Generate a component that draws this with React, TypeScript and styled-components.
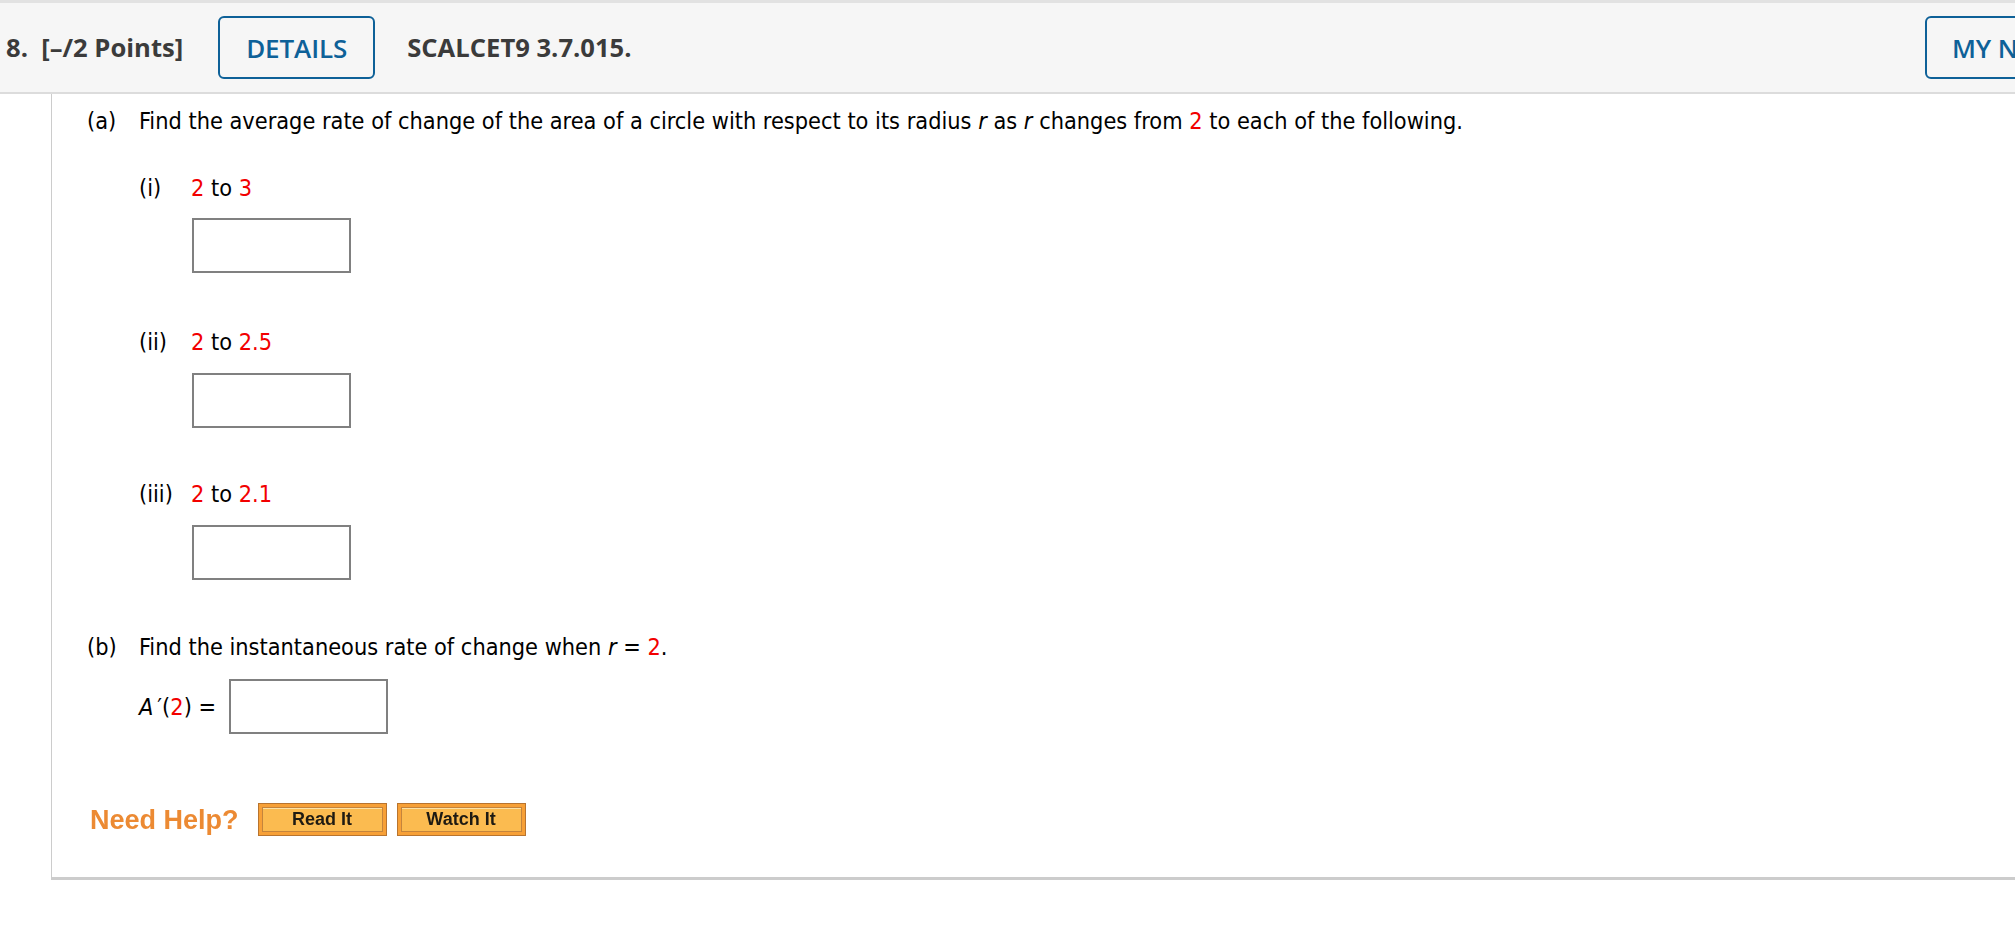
import styled, { createGlobalStyle } from "styled-components";

const GlobalStyle = createGlobalStyle`
  body {
    margin: 0;
    background: #ffffff;
    font-family: "DejaVu Sans Condensed", "DejaVu Sans", Verdana, sans-serif;
    color: #000;
  }
`;

const Header = styled.div`
  display: flex;
  align-items: center;
  height: 89px;
  background: #f6f6f6;
  border-top: 3px solid #e2e2e2;
  border-bottom: 2px solid #dcdcdc;
  overflow: hidden;
  padding-left: 6px;
  font-family: "Open Sans", sans-serif;
  font-weight: 700;
  font-size: 25.6px;
  color: #3b3b3b;
`;

const HeaderText = styled.span<{ $gap?: number }>`
  margin-right: ${(p) => p.$gap ?? 0}px;
  white-space: nowrap;
`;

const OutlineButton = styled.button<{ $push?: boolean }>`
  box-sizing: border-box;
  height: 63px;
  width: 157px;
  padding: 0;
  border: 2px solid #0e6198;
  border-radius: 6px;
  background: transparent;
  color: #0e6198;
  font-family: "Open Sans", sans-serif;
  font-weight: 600;
  font-size: 26px;
  letter-spacing: -0.1px;
  margin-right: 32px;
  flex-shrink: 0;
  white-space: nowrap;
  ${(p) =>
    p.$push
      ? "margin-left: auto; margin-right: -90px; width: 180px; text-align: left; padding-left: 25px;"
      : ""}
`;

const Panel = styled.div`
  margin-left: 51px;
  border-left: 1px solid #cccccc;
  border-bottom: 3px solid #cccccc;
  padding: 15px 0 41px 35px;
  font-size: 23.3px;
  line-height: 24px;
`;

const Row = styled.div<{ $top?: number }>`
  display: flex;
  align-items: center;
  margin-top: ${(p) => p.$top ?? 0}px;
`;

const Label = styled.span`
  width: 52px;
  flex-shrink: 0;
`;

const Indent = styled.div`
  padding-left: 52px;
`;

const Red = styled.span`
  color: #f20000;
`;

const Var = styled.i`
  font-style: italic;
`;

const Prime = styled.span`
  margin-left: 4px;
`;

const Equation = styled.span`
  margin-right: 13px;
`;

const AnswerBox = styled.input<{ $left?: number; $top?: number }>`
  display: block;
  box-sizing: border-box;
  width: 159px;
  height: 55px;
  border: 2px solid #808080;
  background: #fff;
  margin-left: ${(p) => p.$left ?? 0}px;
  margin-top: ${(p) => p.$top ?? 0}px;
  outline: none;
`;

const HelpRow = styled.div`
  display: flex;
  align-items: center;
  margin-top: 69px;
  padding-left: 3px;
`;

const HelpText = styled.span`
  font-family: "Liberation Sans", Arial, sans-serif;
  font-size: 27px;
  font-weight: bold;
  color: #ec8a33;
  margin-right: 19px;
  filter: blur(0.3px);
`;

const HelpButton = styled.button`
  box-sizing: border-box;
  width: 129px;
  height: 33px;
  padding: 3px;
  margin-right: 10px;
  border: 1px solid #b8742f;
  background: #f7a037;
  display: flex;
  cursor: pointer;
`;

const HelpInner = styled.span`
  flex: 1;
  display: flex;
  align-items: center;
  justify-content: center;
  border: 1px solid #c4843c;
  box-shadow: inset 0 1px 0 #fde1a4;
  background: #fbbb50;
  font-family: "Liberation Sans", Arial, sans-serif;
  font-weight: bold;
  font-size: 18px;
  color: #1e1a12;
  filter: blur(0.25px);
`;

const App = () => {
  return (
    <>
      <GlobalStyle />
      <Header>
        <HeaderText $gap={35}>8.&nbsp; [–/2 Points]</HeaderText>
        <OutlineButton>DETAILS</OutlineButton>
        <HeaderText>SCALCET9 3.7.015.</HeaderText>
        <OutlineButton $push>MY NOTES</OutlineButton>
      </Header>
      <Panel>
        <Row>
          <Label>(a)</Label>
          <span>
            Find the average rate of change of the area of a circle with respect to its radius <Var>r</Var> as{" "}
            <Var>r</Var> changes from <Red>2</Red> to each of the following.
          </span>
        </Row>
        <Indent>
          <Row $top={43}>
            <Label>(i)</Label>
            <span>
              <Red>2</Red> to <Red>3</Red>
            </span>
          </Row>
          <AnswerBox $left={53} $top={18} />
          <Row $top={57}>
            <Label>(ii)</Label>
            <span>
              <Red>2</Red> to <Red>2.5</Red>
            </span>
          </Row>
          <AnswerBox $left={53} $top={19} />
          <Row $top={54}>
            <Label>(iii)</Label>
            <span>
              <Red>2</Red> to <Red>2.1</Red>
            </span>
          </Row>
          <AnswerBox $left={53} $top={19} />
        </Indent>
        <Row $top={55}>
          <Label>(b)</Label>
          <span>
            Find the instantaneous rate of change when <Var>r</Var> = <Red>2</Red>.
          </span>
        </Row>
        <Row $top={20}>
          <Label />
          <Equation>
            <Var>A</Var>
            <Prime>′</Prime>(<Red>2</Red>) =
          </Equation>
          <AnswerBox />
        </Row>
        <HelpRow>
          <HelpText>Need Help?</HelpText>
          <HelpButton>
            <HelpInner>Read It</HelpInner>
          </HelpButton>
          <HelpButton>
            <HelpInner>Watch It</HelpInner>
          </HelpButton>
        </HelpRow>
      </Panel>
    </>
  );
};

export default App;
